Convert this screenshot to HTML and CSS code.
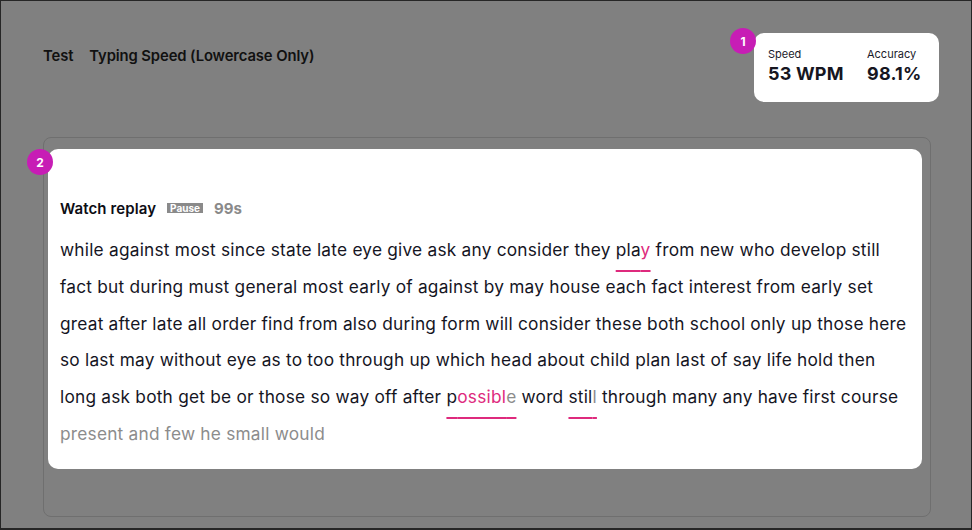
FILE: index.html
```html
<!DOCTYPE html>
<html>
<head>
<meta charset="utf-8">
<link rel="stylesheet" href="styles.css">
</head>
<body>
<div class="page">
  <header class="top">
    <div class="title"><span class="t1">Test</span><span class="t2">Typing Speed (Lowercase Only)</span></div>
    <div class="stats">
      <span class="badge b1">1</span>
      <div class="stat"><div class="lbl">Speed</div><div class="val">53 WPM</div></div>
      <div class="stat"><div class="lbl">Accuracy</div><div class="val">98.1%</div></div>
    </div>
  </header>
  <section class="frame">
    <div class="card">
      <span class="badge b2">2</span>
      <div class="replay"><span class="rt">Watch replay</span><span class="pause">Pause</span><span class="secs">99s</span></div>
      <div class="text">
        <div class="line">while against most since state late eye give ask any consider they <span class="err">pla<span class="pk">y</span></span> from new who develop still</div>
        <div class="line">fact but during must general most early of against by may house each fact interest from early set</div>
        <div class="line">great after late all order find from also during form will consider these both school only up those here</div>
        <div class="line">so last may without eye as to too through up which head about child plan last of say life hold then</div>
        <div class="line">long ask both get be or those so way off after <span class="err">p<span class="pk">ossibl</span><span class="gr">e</span></span> word <span class="err">stil<span class="gr">l</span></span> through many any have first course</div>
        <div class="line gr">present and few he small would</div>
      </div>
    </div>
  </section>
</div>
</body>
</html>
```
FILE: styles.css
```css
* { box-sizing: border-box; }
html, body { margin: 0; padding: 0; }
body {
  width: 972px;
  height: 530px;
  overflow: hidden;
  font-family: Inter, "Noto Sans", sans-serif;
}
.page {
  width: 972px;
  height: 530px;
  background: #808080;
  border: 1px solid #262626;
  border-bottom-width: 2px;
  padding: 0 40px 0 42px;
  display: flex;
  flex-direction: column;
}
.top {
  display: flex;
  justify-content: space-between;
  align-items: flex-start;
  padding-top: 32px;
  margin-right: -8px;
}
.title {
  margin-top: 14px;
  font-size: 14.8px;
  font-weight: 600;
  color: #111;
  letter-spacing: -0.1px;
}
.t2 { margin-left: 16px; }
.stats {
  position: relative;
  width: 185px;
  height: 69px;
  background: #fff;
  border-radius: 10px;
  display: flex;
  padding: 14px 0 0 14px;
  gap: 24px;
}
.stat { white-space: nowrap; flex: none; }
.stat .lbl { font-size: 11px; color: #1a1a2a; line-height: 14px; }
.stat .val { font-size: 18px; font-weight: 700; color: #16161f; line-height: 22px; margin-top: 2px; letter-spacing: 0.2px; }
.stat:first-of-type { width: 75px; }
.badge {
  position: absolute;
  width: 26px;
  height: 26px;
  border-radius: 50%;
  background: #c71db5;
  color: #fff;
  font-size: 12px;
  font-weight: 700;
  display: flex;
  align-items: center;
  justify-content: center;
}
.b1 { left: -24px; top: -5px; }
.b2 { left: -21px; top: 0px; }
.frame {
  margin-top: 35px;
  height: 380px;
  border: 1px solid #6f6f6f;
  border-radius: 8px;
  padding: 11px 8px 0 4px;
}
.card {
  position: relative;
  background: #fff;
  border-radius: 10px;
  height: 320px;
  padding: 50px 12px 0 12px;
}
.replay {
  display: flex;
  align-items: center;
  height: 18px;
}
.rt { font-size: 15px; font-weight: 600; color: #0d0d14; letter-spacing: 0.1px; }
.pause {
  margin-left: 11px;
  background: #8a8a8a;
  color: #fff;
  font-size: 10px;
  font-weight: 700;
  line-height: 10px;
  padding: 0 3px;
}
.secs { margin-left: 11px; font-size: 15px; font-weight: 700; color: #8a8a8a; }
.text {
  margin-top: 20px;
  font-size: 17.3px;
  color: #15151f;
  letter-spacing: 0.22px;
}
.line { white-space: nowrap; height: 36.8px; line-height: 26px; }
.err {
  text-decoration: underline;
  text-decoration-color: #de2a7d;
  text-decoration-thickness: 1.5px;
  text-underline-offset: 14px;
}
.pk { color: #de2a7d; }
.gr { color: #8c8c8c; }
```
